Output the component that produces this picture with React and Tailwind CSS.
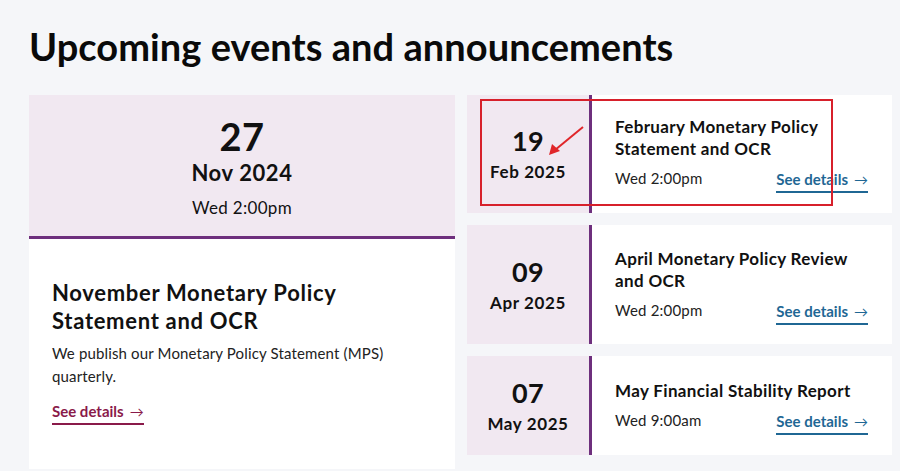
const font = { fontFamily: "Lato, 'Open Sans', sans-serif" };

const events = [
  {
    day: "19",
    month: "Feb 2025",
    title: "February Monetary Policy Statement and OCR",
    time: "Wed 2:00pm",
    h: "h-[118px]",
    pt: "pt-0",
  },
  {
    day: "09",
    month: "Apr 2025",
    title: "April Monetary Policy Review and OCR",
    time: "Wed 2:00pm",
    h: "h-[119px]",
    pt: "pt-[4px]",
  },
  {
    day: "07",
    month: "May 2025",
    title: "May Financial Stability Report",
    time: "Wed 9:00am",
    h: "h-[99px]",
    pt: "pt-[4px]",
  },
];

const Arrow = () => <span className="ml-1.5 text-[14px] font-normal">→</span>;

const EventRow = ({ ev }) => (
  <div className={`flex bg-white ${ev.h}`}>
    <div className="w-[125px] shrink-0 bg-[#f1e8f1] border-r-[3px] border-[#6e2f7d] flex flex-col items-center justify-center text-[#111]">
      <div className="text-[27px] font-bold leading-[32px] tracking-[0.3px]">{ev.day}</div>
      <div className="text-[17px] font-bold leading-[22px] mt-1 tracking-[0.6px]">{ev.month}</div>
    </div>
    <div className={`flex-1 pl-[23px] pr-[24px] flex flex-col justify-center ${ev.pt}`}>
      <div className="text-[17px] font-bold leading-[22px] text-[#111] tracking-[0.35px] pr-4">{ev.title}</div>
      <div className="flex items-start justify-between mt-[7px]">
        <span className="text-[15px] leading-[22px] text-[#222] tracking-[0.2px]">{ev.time}</span>
        <a className="text-[15px] font-bold leading-[20px] text-[#1f6794] border-b-2 border-[#1f6794] pb-[1px] mt-[2px]">
          See details<Arrow />
        </a>
      </div>
    </div>
  </div>
);

export default function App() {
  return (
    <div className="w-[900px] h-[471px] overflow-hidden bg-[#f5f6f9] relative" style={font}>
      <div className="pl-[29px] pt-[24px]">
        <h1 className="text-[38px] font-bold leading-[44px] text-[#0a0a0a] tracking-[0.05px]">
          Upcoming events and announcements
        </h1>
        <div className="flex gap-[12px] mt-[27px] items-start">
          <div className="w-[426px] h-[374px] bg-white flex flex-col">
            <div className="h-[144px] bg-[#f1e8f1] border-b-[3px] border-[#6e2f7d] flex flex-col items-center pt-[20px] text-[#111]">
              <div className="text-[38px] font-bold leading-[42px] tracking-[0.5px]">27</div>
              <div className="text-[22px] font-bold leading-[28px] mt-[2px] tracking-[0.6px]">Nov 2024</div>
              <div className="text-[17px] leading-[22px] mt-[10px] tracking-[0.3px]">Wed 2:00pm</div>
            </div>
            <div className="px-[23px] pt-[40px]">
              <div className="text-[22px] font-bold leading-[28px] text-[#111] tracking-[0.7px] pr-4">
                November Monetary Policy Statement and OCR
              </div>
              <p className="text-[15px] leading-[23px] text-[#222] mt-[7px] tracking-[0.15px]">
                We publish our Monetary Policy Statement (MPS) quarterly.
              </p>
              <a className="inline-block mt-[13px] text-[15px] font-bold leading-[20px] text-[#8a1a4a] border-b-2 border-[#8a1a4a] pb-[1px]">
                See details<Arrow />
              </a>
            </div>
          </div>
          <div className="w-[425px] flex flex-col gap-[12px]">
            {events.map((ev) => (
              <EventRow key={ev.day} ev={ev} />
            ))}
          </div>
        </div>
      </div>

      {/* annotation overlay */}
      <div className="absolute left-[480px] top-[99px] w-[353px] h-[107px] border-2 border-[#d7202b] pointer-events-none" />
      <svg className="absolute left-0 top-0 pointer-events-none" width="900" height="471">
        <line x1="583" y1="127" x2="555" y2="150" stroke="#e0262a" strokeWidth="2" />
        <polygon points="549,155 552,144 560,151" fill="#e0262a" />
      </svg>
    </div>
  );
}
